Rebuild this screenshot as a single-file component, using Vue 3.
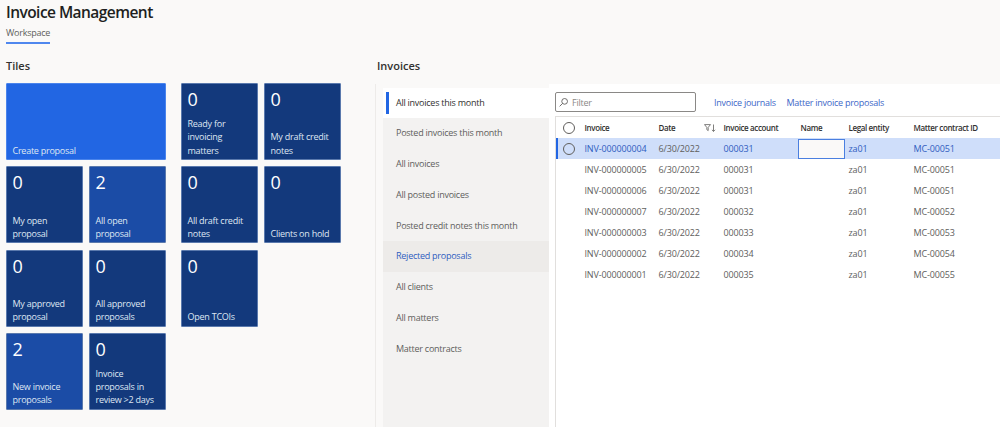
<template>
  <div class="page">
    <h1 class="title">Invoice Management</h1>
    <div class="tabs"><span class="tab">Workspace</span></div>

    <div class="sections">
      <section class="tiles-section">
        <h2 class="heading">Tiles</h2>
        <div class="tile-groups">
          <div class="tile-grid">
            <div class="tile wide"><div class="tile-label">Create proposal</div></div>
            <div v-for="t in leftTiles" :key="t.label" class="tile" :class="{ lit: t.count > 0 }">
              <div class="tile-count">{{ t.count }}</div>
              <div class="tile-label">{{ t.label }}</div>
            </div>
          </div>
          <div class="tile-grid">
            <div v-for="t in rightTiles" :key="t.label" class="tile">
              <div class="tile-count">{{ t.count }}</div>
              <div class="tile-label">{{ t.label }}</div>
            </div>
          </div>
        </div>
      </section>

      <section class="invoices-section">
        <h2 class="heading">Invoices</h2>
        <div class="panel">
          <ul class="nav">
            <li
              v-for="(item, i) in navItems"
              :key="item"
              class="nav-item"
              :class="{ active: i === 0, hovered: i === 5 }"
            >{{ item }}</li>
          </ul>
          <div class="content">
            <div class="toolbar">
              <div class="filter">
                <svg width="9" height="9" viewBox="0 0 12 12" fill="none" stroke="#605e5c" stroke-width="1.2">
                  <circle cx="7.5" cy="4.5" r="3.8" />
                  <path d="M4.8 7.2L0.8 11.2" />
                </svg>
                <span>Filter</span>
              </div>
              <a class="link">Invoice journals</a>
              <a class="link">Matter invoice proposals</a>
            </div>
            <div class="table">
              <div class="row head">
                <div class="cell check"><span class="radio"></span></div>
                <div class="cell c-invoice">Invoice</div>
                <div class="cell c-date">
                  Date
                  <svg class="sort" width="12" height="8" viewBox="0 0 12 8" fill="none" stroke="#605e5c" stroke-width="0.8">
                    <path d="M0.5 0.6H6.5L4.2 3.4V6.6L2.8 5.6V3.4Z" />
                    <path d="M9.5 0.5V7.4M7.9 5.8L9.5 7.4L11.1 5.8" />
                  </svg>
                </div>
                <div class="cell c-account">Invoice account</div>
                <div class="cell c-name">Name</div>
                <div class="cell c-entity">Legal entity</div>
                <div class="cell c-contract">Matter contract ID</div>
              </div>
              <div
                v-for="(r, i) in rows"
                :key="r.invoice"
                class="row"
                :class="{ selected: i === 0 }"
              >
                <div class="cell check"><span v-if="i === 0" class="radio"></span></div>
                <div class="cell c-invoice">{{ r.invoice }}</div>
                <div class="cell c-date">6/30/2022</div>
                <div class="cell c-account">{{ r.account }}</div>
                <div class="cell c-name"><span v-if="i === 0" class="name-input"></span></div>
                <div class="cell c-entity">za01</div>
                <div class="cell c-contract">{{ r.contract }}</div>
              </div>
            </div>
          </div>
        </div>
      </section>
    </div>
  </div>
</template>

<script setup>
const leftTiles = [
  { count: 0, label: 'My open proposal' },
  { count: 2, label: 'All open proposal' },
  { count: 0, label: 'My approved proposal' },
  { count: 0, label: 'All approved proposals' },
  { count: 2, label: 'New invoice proposals' },
  { count: 0, label: 'Invoice proposals in review >2 days' }
]

const rightTiles = [
  { count: 0, label: 'Ready for invoicing matters' },
  { count: 0, label: 'My draft credit notes' },
  { count: 0, label: 'All draft credit notes' },
  { count: 0, label: 'Clients on hold' },
  { count: 0, label: 'Open TCOIs' }
]

const navItems = [
  'All invoices this month',
  'Posted invoices this month',
  'All invoices',
  'All posted invoices',
  'Posted credit notes this month',
  'Rejected proposals',
  'All clients',
  'All matters',
  'Matter contracts'
]

const rows = [
  { invoice: 'INV-000000004', account: '000031', contract: 'MC-00051' },
  { invoice: 'INV-000000005', account: '000031', contract: 'MC-00051' },
  { invoice: 'INV-000000006', account: '000031', contract: 'MC-00051' },
  { invoice: 'INV-000000007', account: '000032', contract: 'MC-00052' },
  { invoice: 'INV-000000003', account: '000033', contract: 'MC-00053' },
  { invoice: 'INV-000000002', account: '000034', contract: 'MC-00054' },
  { invoice: 'INV-000000001', account: '000035', contract: 'MC-00055' }
]
</script>

<style scoped>
.page {
  height: 427px;
  overflow: hidden;
  background: #faf9f8;
  color: #323130;
  font-family: "Open Sans", "Noto Sans", sans-serif;
}

.title {
  margin: 0;
  padding: 1px 0 0 6px;
  font-size: 15.5px;
  line-height: 22px;
  font-weight: 600;
  letter-spacing: -0.55px;
  color: #201f1e;
}

.tabs {
  display: flex;
  margin: 3px 0 0 6px;
  height: 18px;
}

.tab {
  box-sizing: border-box;
  height: 18px;
  font-size: 9px;
  line-height: 14px;
  letter-spacing: -0.25px;
  color: #605e5c;
  border-bottom: 2px solid #4f87ee;
}

.sections {
  display: flex;
  margin-top: 14px;
}

.heading {
  margin: 0;
  font-size: 11px;
  line-height: 16px;
  font-weight: 600;
  color: #323130;
}

.tiles-section {
  width: 376px;
  padding-left: 6px;
  box-sizing: border-box;
}

.tile-groups {
  display: flex;
  gap: 15px;
  margin-top: 9.3px;
}

.tile-grid {
  display: grid;
  grid-template-columns: 77px 77px;
  grid-auto-rows: 77px;
  gap: 6.2px 6px;
  align-content: start;
}

.tile {
  display: flex;
  flex-direction: column;
  justify-content: space-between;
  box-sizing: border-box;
  padding: 0 5.5px 2px;
  background: #13397c;
  border: 1px solid #5a79ad;
  border-radius: 1px;
  color: #dfe6f2;
}

.tile.lit {
  background: #1b4ca6;
}

.tile.wide {
  grid-column: span 2;
  justify-content: flex-end;
  background: #2266e3;
  border-color: #4a84ec;
}

.tile-count {
  font-size: 18px;
  line-height: 30px;
  color: #fff;
}

.tile-label {
  font-size: 9px;
  line-height: 13.4px;
  letter-spacing: -0.25px;
}

.invoices-section {
  flex: 1;
  min-width: 0;
  padding-left: 1px;
}

.panel {
  display: flex;
  height: 344px;
  margin-top: 10px;
  margin-left: -2px;
  padding-left: 7px;
  border-left: 1px solid #edebe9;
}

.nav {
  width: 166px;
  flex-shrink: 0;
  margin: 3.5px 0 0;
  padding: 0;
  list-style: none;
  background: #f3f2f1;
}

.nav-item {
  position: relative;
  height: 30.8px;
  padding-left: 13px;
  font-size: 9px;
  letter-spacing: -0.25px;
  line-height: 30.8px;
  color: #605e5c;
}

.nav-item.active {
  background: #fff;
  color: #323130;
}

.nav-item.active::before {
  content: "";
  position: absolute;
  left: 3px;
  top: 4px;
  bottom: 4px;
  width: 3px;
  background: #2266e3;
}

.nav-item.hovered {
  background: #edebe9;
  color: #2f5dc0;
}

.content {
  flex: 1;
  min-width: 0;
  padding-left: 6px;
  background: #fff;
}

.toolbar {
  display: flex;
  align-items: center;
  box-sizing: border-box;
  height: 32px;
  padding: 8px 0 4px;
}

.filter {
  display: flex;
  align-items: center;
  gap: 4px;
  box-sizing: border-box;
  width: 141px;
  height: 20px;
  padding-left: 3px;
  margin-right: 18px;
  background: #fff;
  border: 1px solid #8a8886;
  border-radius: 2px;
  font-size: 9px;
  letter-spacing: -0.25px;
  color: #8a8886;
}

.link {
  margin-right: 10.5px;
  font-size: 9px;
  letter-spacing: -0.25px;
  color: #3d67c8;
}

.table {
  border-top: 1px solid #e1dfdd;
  border-left: 1px solid #e1dfdd;
  height: 320px;
}

.row {
  display: flex;
  align-items: center;
  height: 21px;
  font-size: 9px;
  letter-spacing: -0.15px;
  color: #605e5c;
}

.row.head {
  font-size: 8px;
  letter-spacing: -0.38px;
  font-weight: 600;
  color: #323130;
}

.row.selected {
  background: #cfdefa;
  box-shadow: inset 2px 0 0 #2266e3;
  color: #2f5dc0;
}

.row.selected .c-date {
  color: #605e5c;
}

.cell {
  box-sizing: border-box;
  white-space: nowrap;
  flex-shrink: 0;
}

.check {
  display: flex;
  justify-content: center;
  width: 26.5px;
}

.radio {
  display: block;
  box-sizing: border-box;
  width: 12px;
  height: 12px;
  border: 1px solid #605e5c;
  border-radius: 50%;
}

.c-invoice {
  width: 76px;
  padding-left: 2px;
}

.c-date {
  position: relative;
  width: 65px;
}

.sort {
  position: absolute;
  right: 8px;
  top: 1.5px;
}

.c-account {
  width: 77px;
}

.c-name {
  width: 48px;
}

.name-input {
  display: block;
  box-sizing: border-box;
  width: 47px;
  height: 20px;
  margin-left: -3px;
  background: #faf9f8;
  border: 1px solid #4a7fe0;
}

.c-entity {
  width: 65px;
}

.c-contract {
  width: 90px;
}
</style>

<style>
html,
body {
  background: #faf9f8;
}
</style>
